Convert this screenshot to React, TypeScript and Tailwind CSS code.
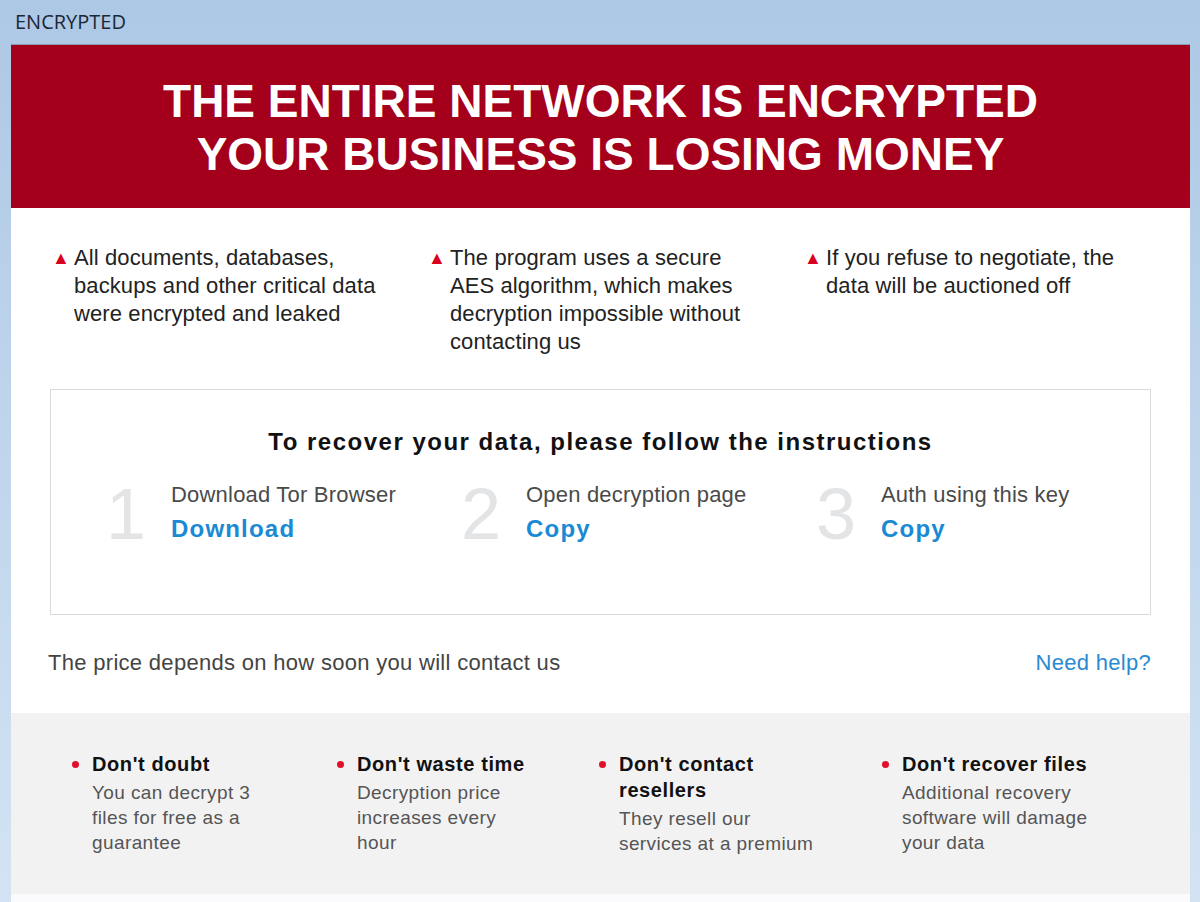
import { ReactNode } from 'react';

const font = { fontFamily: '"Liberation Sans", Arial, sans-serif' };

function Triangle() {
  return <span className="w-[14px] text-[#d8001e] text-[18px] leading-[28px] mr-[8px] shrink-0">▲</span>;
}

function Notice({ children }: { children: ReactNode }) {
  return (
    <div className="w-[376px] flex items-start">
      <Triangle />
      <p className="text-[22px] leading-[28px] text-[#222] tracking-[0.1px]">{children}</p>
    </div>
  );
}

function Step({ n, label, link, last }: { n: string; label: string; link: string; last?: boolean }) {
  return (
    <div className={last ? 'flex-1 flex items-center' : 'w-[355px] shrink-0 flex items-center'}>
      <div className="w-[50px] text-[72px] leading-none text-[#e3e4e6] text-center">{n}</div>
      <div className="ml-[20px] flex flex-col">
        <span className="text-[22px] leading-[30px] text-[#4a4a4a] tracking-[0.2px]">{label}</span>
        <span className="text-[24px] leading-[38px] font-bold text-[#198ad3] tracking-[1.2px]">{link}</span>
      </div>
    </div>
  );
}

function Tip({ title, body }: { title: string; body: string }) {
  return (
    <div className="flex items-start">
      <span className="w-[7px] h-[7px] rounded-full bg-[#e0102c] mt-[10px] mr-[13px] shrink-0" />
      <div className="flex flex-col">
        <span className="whitespace-pre-line text-[20px] leading-[26px] font-bold text-[#111] tracking-[0.6px]">{title}</span>
        <span className="whitespace-pre-line text-[19px] leading-[25px] text-[#555] mt-[3px] tracking-[0.4px]">{body}</span>
      </div>
    </div>
  );
}

export default function App() {
  return (
    <div style={font} className="w-[1200px] h-[902px] bg-gradient-to-b from-[#adc8e5] to-[#d3e3f3] flex flex-col overflow-hidden">
      <div className="h-[44px] pl-[15px] flex items-center text-[20px] text-[#1b2636]" style={{ fontFamily: '"Open Sans", "Noto Sans", sans-serif' }}>
        ENCRYPTED
      </div>
      <div className="ml-[11px] mr-[10px] flex-1 bg-white flex flex-col border-t border-[#8a9bb0]">
        <div className="h-[163px] bg-[#a5001b] flex flex-col items-center justify-center text-white font-bold text-[46px] leading-[53px] pt-[2px]">
          <div>THE ENTIRE NETWORK IS ENCRYPTED</div>
          <div>YOUR BUSINESS IS LOSING MONEY</div>
        </div>

        <div className="h-[181px] pt-[36px] pl-[41px] flex">
          <Notice>All documents, databases,<br />backups and other critical data<br />were encrypted and leaked</Notice>
          <Notice>The program uses a secure<br />AES algorithm, which makes<br />decryption impossible without<br />contacting us</Notice>
          <Notice>If you refuse to negotiate, the<br />data will be auctioned off</Notice>
        </div>

        <div className="ml-[39px] w-[1101px] h-[226px] border border-[#d9dadc] flex flex-col items-center">
          <h2 className="mt-[36px] text-[24px] leading-[32px] font-bold text-[#111] tracking-[1.5px]">
            To recover your data, please follow the instructions
          </h2>
          <div className="mt-[20px] w-full pl-[50px] flex">
            <Step n="1" label="Download Tor Browser" link="Download" />
            <Step n="2" label="Open decryption page" link="Copy" />
            <Step n="3" label="Auth using this key" link="Copy" last />
          </div>
        </div>

        <div className="h-[98px] pl-[37px] pr-[39px] flex items-center justify-between pb-[4px]">
          <span className="text-[22px] text-[#444] tracking-[0.3px]">The price depends on how soon you will contact us</span>
          <span className="text-[22px] text-[#2a8ad2] tracking-[0.3px]">Need help?</span>
        </div>

        <div className="h-[181px] bg-[#f3f2f3] pt-[38px] pl-[61px] grid grid-cols-[265px_262px_283px_260px]">
          <Tip title="Don't doubt" body={'You can decrypt 3\nfiles for free as a\nguarantee'} />
          <Tip title="Don't waste time" body={'Decryption price\nincreases every\nhour'} />
          <Tip title={"Don't contact\nresellers"} body={'They resell our\nservices at a premium'} />
          <Tip title="Don't recover files" body={'Additional recovery\nsoftware will damage\nyour data'} />
        </div>
        <div className="flex-1 bg-[#fbfbfd]" />
      </div>
    </div>
  );
}
